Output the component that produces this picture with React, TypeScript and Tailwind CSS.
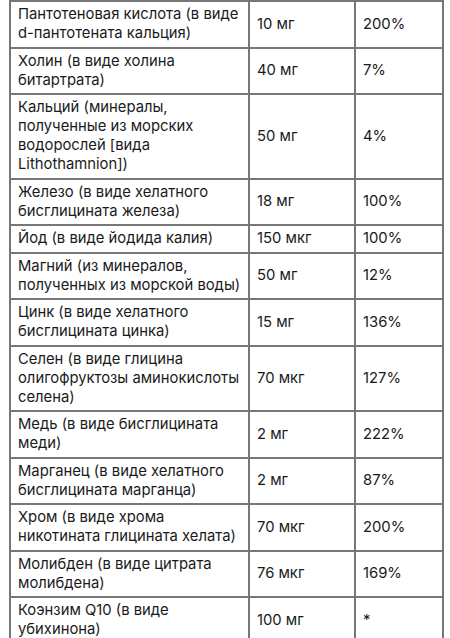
const rows: [string[], string, string][] = [
  [['Пантотеновая кислота (в виде', 'd-пантотената кальция)'], '10 мг', '200%'],
  [['Холин (в виде холина', 'битартрата)'], '40 мг', '7%'],
  [['Кальций (минералы,', 'полученные из морских', 'водорослей [вида', 'Lithothamnion])'], '50 мг', '4%'],
  [['Железо (в виде хелатного', 'бисглицината железа)'], '18 мг', '100%'],
  [['Йод (в виде йодида калия)'], '150 мкг', '100%'],
  [['Магний (из минералов,', 'полученных из морской воды)'], '50 мг', '12%'],
  [['Цинк (в виде хелатного', 'бисглицината цинка)'], '15 мг', '136%'],
  [['Селен (в виде глицина', 'олигофруктозы аминокислоты', 'селена)'], '70 мкг', '127%'],
  [['Медь (в виде бисглицината', 'меди)'], '2 мг', '222%'],
  [['Марганец (в виде хелатного', 'бисглицината марганца)'], '2 мг', '87%'],
  [['Хром (в виде хрома', 'никотината глицината хелата)'], '70 мкг', '200%'],
  [['Молибден (в виде цитрата', 'молибдена)'], '76 мкг', '169%'],
  [['Коэнзим Q10 (в виде', 'убихинона)'], '100 мг', '*'],
];

export default function App() {
  return (
    <div className="w-[450px] h-[638px] overflow-hidden bg-white pl-[9px] font-['Inter',sans-serif] text-[14.8px] text-[#1a1a1a]">
      <table className="table-fixed border-collapse w-[433px]">
        <colgroup>
          <col className="w-[239px]" />
          <col className="w-[106px]" />
          <col className="w-[88px]" />
        </colgroup>
        <tbody>
          {rows.map(([name, amount, dv], i) => (
            <tr key={i}>
              <td className="border-2 border-[#777] px-[7px] py-[3.25px] leading-[19px] align-middle">
                {name.map((line, j) => (
                  <div key={j} className="whitespace-nowrap">{line}</div>
                ))}
              </td>
              <td className="border-2 border-[#777] px-[7px] py-[3.25px] leading-[19px] align-middle whitespace-nowrap">
                {amount}
              </td>
              <td className="border-2 border-[#777] px-[7px] py-[3.25px] leading-[19px] align-middle whitespace-nowrap">
                {dv}
              </td>
            </tr>
          ))}
        </tbody>
      </table>
    </div>
  );
}
